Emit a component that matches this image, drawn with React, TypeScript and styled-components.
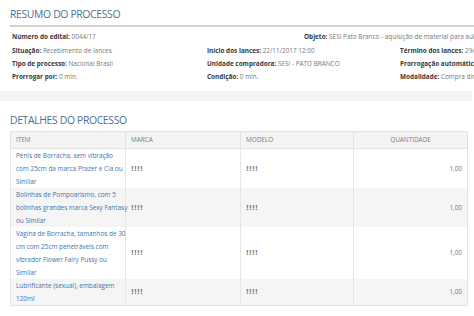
import React from 'react';
import styled, { createGlobalStyle } from 'styled-components';

const GlobalStyle = createGlobalStyle`
  html, body {
    margin: 0;
    padding: 0;
    background: #ffffff;
    overflow: hidden;
  }
  body {
    font-family: 'Open Sans', 'Noto Sans', sans-serif;
    color: #555555;
  }
`;

const Page = styled.div`
  width: 474px;
  height: 316px;
  overflow: hidden;
  padding-top: 6px;
  box-sizing: border-box;
`;

const Heading = styled.h2<{ $ruled?: boolean }>`
  margin: 0 0 0 10px;
  padding-bottom: ${(p) => (p.$ruled ? '3px' : '3px')};
  font-size: 10.4px;
  line-height: 16px;
  font-weight: 400;
  letter-spacing: -0.35px;
  color: #4d6f93;
  border-bottom: ${(p) => (p.$ruled ? '2px solid #d2d2d2' : 'none')};
`;

const Summary = styled.div`
  padding: 3px 0 0 12px;
  display: grid;
  grid-template-columns: 195px 193px 1fr;
  grid-auto-rows: 13.4px;
  font-size: 6.4px;
  align-items: center;
  white-space: nowrap;
`;

const FirstRow = styled.div`
  grid-column: 1 / 4;
  display: grid;
  grid-template-columns: 292px 1fr;
  overflow: hidden;
`;

const Field = styled.div`
  overflow: hidden;
  color: #777777;
`;

const Label = styled.b`
  color: #3a3a3a;
  font-weight: 700;
`;

const Band = styled.div`
  margin-top: 7px;
  height: 10px;
  width: 472px;
  background: #f4f4f4;
`;

const Spacer = styled.div`
  height: 11px;
`;

const Table = styled.table`
  margin: 0 0 0 10px;
  width: 457px;
  border-collapse: collapse;
  table-layout: fixed;
  font-size: 6.4px;
`;

const Th = styled.th<{ $center?: boolean }>`
  height: 17px;
  padding: 0 5px;
  box-sizing: border-box;
  background: #f4f4f4;
  border: 1px solid #e2e2e2;
  color: #7a7a7a;
  font-weight: 400;
  text-align: ${(p) => (p.$center ? 'center' : 'left')};
`;

const Tr = styled.tr<{ $shade: boolean }>`
  background: ${(p) => (p.$shade ? '#f5f5f5' : '#ffffff')};
`;

const Td = styled.td<{ $right?: boolean }>`
  padding: 0 5px;
  border: 1px solid #e6e6e6;
  border-top: none;
  border-bottom: none;
  line-height: 13px;
  vertical-align: middle;
  color: #777777;
  text-align: ${(p) => (p.$right ? 'right' : 'left')};
`;

const ItemLine = styled.div`
  color: #4273ad;
  white-space: nowrap;
`;

const Marks = styled.span`
  font-family: 'Liberation Sans', sans-serif;
  font-size: 8px;
  font-weight: 700;
  color: #707070;
  letter-spacing: 0.3px;
`;

const LastBorder = styled.tr`
  border-top: 1px solid #e2e2e2;
`;

const items = [
  ['Pênis de Borracha, sem vibração', 'com 25cm da marca Prazer e Cia ou', 'Similar'],
  ['Bolinhas de Pompoarismo, com 5', 'bolinhas grandes marca Sexy Fantasy', 'ou Similar'],
  ['Vagina de Borracha, tamanhos de 30', 'cm com 25cm penetráveis com', 'vibrador Flower Fairy Pussy ou', 'Similar'],
  ['Lubrificante (sexual), embalagem', '120ml'],
];

export default function App() {
  return (
    <Page>
      <GlobalStyle />
      <Heading $ruled>RESUMO DO PROCESSO</Heading>
      <Summary>
        <FirstRow>
          <Field>
            <Label>Número do edital:</Label> 0044/17
          </Field>
          <Field>
            <Label>Objeto:</Label> SESI Pato Branco - aquisição de material para aula
          </Field>
        </FirstRow>
        <Field>
          <Label>Situação:</Label> Recebimento de lances
        </Field>
        <Field>
          <Label>Início dos lances:</Label> 22/11/2017 12:00
        </Field>
        <Field>
          <Label>Término dos lances:</Label> 29/11/2017 12:00
        </Field>
        <Field>
          <Label>Tipo de processo:</Label> Nacional Brasil
        </Field>
        <Field>
          <Label>Unidade compradora:</Label> SESI - PATO BRANCO
        </Field>
        <Field>
          <Label>Prorrogação automática:</Label> Sim
        </Field>
        <Field>
          <Label>Prorrogar por:</Label> 0 min.
        </Field>
        <Field>
          <Label>Condição:</Label> 0 min.
        </Field>
        <Field>
          <Label>Modalidade:</Label> Compra direta
        </Field>
      </Summary>
      <Band />
      <Spacer />
      <Heading>DETALHES DO PROCESSO</Heading>
      <Table>
        <colgroup>
          <col style={{ width: 115 }} />
          <col style={{ width: 115 }} />
          <col style={{ width: 113 }} />
          <col style={{ width: 114 }} />
        </colgroup>
        <thead>
          <tr>
            <Th>ITEM</Th>
            <Th>MARCA</Th>
            <Th>MODELO</Th>
            <Th $center>QUANTIDADE</Th>
          </tr>
        </thead>
        <tbody>
          {items.map((lines, i) => (
            <Tr key={i} $shade={i % 2 === 1}>
              <Td>
                {lines.map((l) => (
                  <ItemLine key={l}>{l}</ItemLine>
                ))}
              </Td>
              <Td>
                <Marks>!!!!</Marks>
              </Td>
              <Td>
                <Marks>!!!!</Marks>
              </Td>
              <Td $right>1,00</Td>
            </Tr>
          ))}
          <LastBorder />
        </tbody>
      </Table>
    </Page>
  );
}
